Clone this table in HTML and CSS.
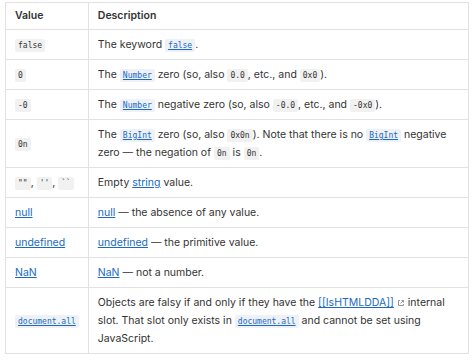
FILE: index.html
```html
<!DOCTYPE html>
<html lang="en">
<head>
    <meta charset="UTF-8">
    <title>Falsy values</title>
    <link rel="stylesheet" href="styles.css">
</head>
<body>
    <table class="values">
        <thead>
            <tr>
                <th class="col-value">Value</th>
                <th>Description</th>
            </tr>
        </thead>
        <tbody>
            <tr>
                <td><code>false</code></td>
                <td>The keyword <a href="#"><code>false</code></a>.</td>
            </tr>
            <tr>
                <td><code>0</code></td>
                <td>The <a href="#"><code>Number</code></a> zero (so, also <code>0.0</code>, etc., and <code>0x0</code>).</td>
            </tr>
            <tr>
                <td><code>-0</code></td>
                <td>The <a href="#"><code>Number</code></a> negative zero (so, also <code>-0.0</code>, etc., and <code>-0x0</code>).</td>
            </tr>
            <tr>
                <td><code>0n</code></td>
                <td>The <a href="#"><code>BigInt</code></a> zero (so, also <code>0x0n</code>). Note that there is no <a href="#"><code>BigInt</code></a> negative zero — the negation of <code>0n</code> is <code>0n</code>.</td>
            </tr>
            <tr>
                <td><code>""</code>, <code>''</code>, <code>``</code></td>
                <td>Empty <a href="#">string</a> value.</td>
            </tr>
            <tr>
                <td><a href="#">null</a></td>
                <td><a href="#">null</a> — the absence of any value.</td>
            </tr>
            <tr>
                <td><a href="#">undefined</a></td>
                <td><a href="#">undefined</a> — the primitive value.</td>
            </tr>
            <tr>
                <td><a href="#">NaN</a></td>
                <td><a href="#">NaN</a> — not a number.</td>
            </tr>
            <tr>
                <td><a href="#"><code>document.all</code></a></td>
                <td>Objects are falsy if and only if they have the <a href="#" class="external">[[IsHTMLDDA]]</a><svg class="ext-icon" width="8" height="8" viewBox="0 0 8 8"><path d="M3 1.5H1.5v5h5V5M4.5 1.5h2v2M6.5 1.5L3.5 4.5" fill="none" stroke="#8a8a8a" stroke-width="0.9"/></svg> internal slot. That slot only exists in <a href="#"><code>document.all</code></a> and cannot be set using JavaScript.</td>
            </tr>
        </tbody>
    </table>
</body>
</html>
```
FILE: styles.css
```css
body {
    margin: 2px 5px;
    font-family: Inter, 'Noto Sans', sans-serif;
    font-size: 10.5px;
    color: #333;
    background-color: #fff;
}

.values {
    width: 464px;
    border-collapse: collapse;
    border: 1px solid #e2e2e2;
}

.values th,
.values td {
    border: 1px solid #e2e2e2;
    padding: 6px 9px 5px;
    line-height: 18px;
    text-align: left;
    vertical-align: middle;
}

.values th {
    font-weight: 600;
    padding-top: 4px;
    padding-bottom: 4px;
}

.values .col-value {
    width: 60px;
}

code {
    font-family: 'DejaVu Sans Mono', monospace;
    font-size: 8px;
    line-height: 1;
    background-color: #f2f1f1;
    padding: 2px 3px;
    border-radius: 2px;
}

a {
    color: #1a6ac2;
    text-decoration: underline;
}

a code {
    color: #1a6ac2;
    background-color: #eef1f6;
}

.ext-icon {
    margin-left: 3px;
    vertical-align: -1px;
}
```
